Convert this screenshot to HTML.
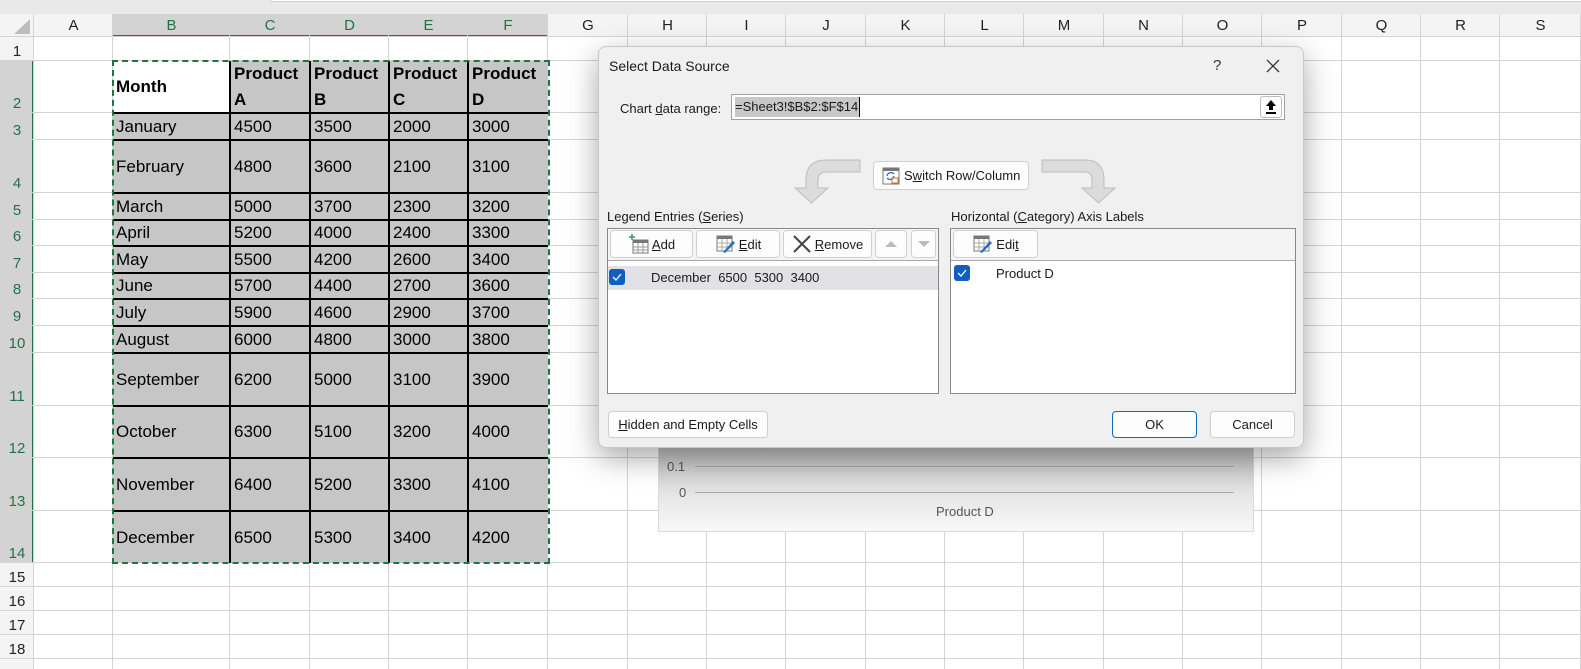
<!DOCTYPE html>
<html><head><meta charset="utf-8">
<style>
*{box-sizing:border-box;margin:0;padding:0}
body{width:1581px;height:669px;overflow:hidden;background:#fff;position:relative;font-family:"Liberation Sans",sans-serif}
.a{position:absolute}
.ch{position:absolute;top:14px;height:23px;font-size:15px;color:#222;text-align:center;line-height:23px}
.rh{position:absolute;left:0;width:34px;font-size:15px;color:#222;text-align:center;display:flex;align-items:flex-end;justify-content:center;padding-bottom:1px}
.c{position:absolute;background:#c6c6c6;font-size:17px;color:#000;display:flex;align-items:center;padding-left:3px}
.d{font-size:13px;color:#1a1a1a;font-family:"Liberation Sans",sans-serif}
.btn{position:absolute;background:#fdfdfd;border:1px solid #d0d0d0;border-radius:4px;font-size:13px;color:#1a1a1a;display:flex;align-items:center;justify-content:center}
u{text-decoration:underline}
</style></head><body>
<div class="a" style="left:0;top:0;width:1581px;height:14px;background:#e9e9e9"></div>
<div class="a" style="left:270px;top:0;width:1311px;height:2px;background:#fff;border-left:1px solid #ccc;border-bottom:1px solid #ccc"></div>
<div class="a" style="left:0;top:14px;width:1581px;height:23px;background:#f4f4f4;border-bottom:1px solid #bbb"></div>
<div class="a" style="left:113px;top:14px;width:435px;height:23px;background:#d3d3d3;border-bottom:2px solid #217346"></div>
<div class="a" style="left:0;top:37px;width:34px;height:632px;background:#f4f4f4;border-right:1px solid #bbb"></div>
<div class="a" style="left:0;top:61px;width:34px;height:502px;background:#d3d3d3;border-right:2px solid #217346"></div>
<svg class="a" style="left:0;top:14px" width="34" height="23"><polygon points="30,5 30,20 14,20" fill="#bdbdbd"/></svg>
<div id="grid"></div>
<script>
var xs=[34,113,230,310,389,468,548,628,707,786,866,945,1024,1104,1183,1262,1342,1421,1500,1581];
var ys=[37,61,113,140,193,220,246,273,299,326,353,406,458,511,563,587,611,635,659];
var g=document.getElementById('grid'),h='';
xs.forEach(function(x){h+='<div class="a" style="left:'+(x-1)+'px;top:14px;width:1px;height:655px;background:#d4d4d4"></div>'});
ys.forEach(function(y){h+='<div class="a" style="left:0;top:'+(y-1)+'px;width:1581px;height:1px;background:#d4d4d4"></div>'});
g.innerHTML=h;
</script>
<div class="ch" style="left:34px;width:79px">A</div>
<div class="ch" style="left:113px;width:117px;color:#217346">B</div>
<div class="ch" style="left:230px;width:80px;color:#217346">C</div>
<div class="ch" style="left:310px;width:79px;color:#217346">D</div>
<div class="ch" style="left:389px;width:79px;color:#217346">E</div>
<div class="ch" style="left:468px;width:80px;color:#217346">F</div>
<div class="ch" style="left:548px;width:80px">G</div>
<div class="ch" style="left:628px;width:79px">H</div>
<div class="ch" style="left:707px;width:79px">I</div>
<div class="ch" style="left:786px;width:80px">J</div>
<div class="ch" style="left:866px;width:79px">K</div>
<div class="ch" style="left:945px;width:79px">L</div>
<div class="ch" style="left:1024px;width:80px">M</div>
<div class="ch" style="left:1104px;width:79px">N</div>
<div class="ch" style="left:1183px;width:79px">O</div>
<div class="ch" style="left:1262px;width:80px">P</div>
<div class="ch" style="left:1342px;width:79px">Q</div>
<div class="ch" style="left:1421px;width:79px">R</div>
<div class="ch" style="left:1500px;width:81px">S</div>

<div class="rh" style="top:37px;height:24px">1</div>
<div class="rh" style="top:61px;height:52px;color:#217346">2</div>
<div class="rh" style="top:113px;height:27px;color:#217346">3</div>
<div class="rh" style="top:140px;height:53px;color:#217346">4</div>
<div class="rh" style="top:193px;height:27px;color:#217346">5</div>
<div class="rh" style="top:220px;height:26px;color:#217346">6</div>
<div class="rh" style="top:246px;height:27px;color:#217346">7</div>
<div class="rh" style="top:273px;height:26px;color:#217346">8</div>
<div class="rh" style="top:299px;height:27px;color:#217346">9</div>
<div class="rh" style="top:326px;height:27px;color:#217346">10</div>
<div class="rh" style="top:353px;height:53px;color:#217346">11</div>
<div class="rh" style="top:406px;height:52px;color:#217346">12</div>
<div class="rh" style="top:458px;height:53px;color:#217346">13</div>
<div class="rh" style="top:511px;height:52px;color:#217346">14</div>
<div class="rh" style="top:563px;height:24px">15</div>
<div class="rh" style="top:587px;height:24px">16</div>
<div class="rh" style="top:611px;height:24px">17</div>
<div class="rh" style="top:635px;height:24px">18</div>

<!-- table -->
<div class="a" style="left:113px;top:61px;width:435px;height:502px;background:#000"></div>
<div class="c" style="left:113px;top:61px;width:116px;height:51px;background:#fff;font-weight:bold">Month</div>
<div class="c" style="left:231px;top:61px;width:78px;height:51px;font-weight:bold;line-height:26px;align-items:flex-start">Product<br>A</div>
<div class="c" style="left:311px;top:61px;width:77px;height:51px;font-weight:bold;line-height:26px;align-items:flex-start">Product<br>B</div>
<div class="c" style="left:390px;top:61px;width:77px;height:51px;font-weight:bold;line-height:26px;align-items:flex-start">Product<br>C</div>
<div class="c" style="left:469px;top:61px;width:79px;height:51px;font-weight:bold;line-height:26px;align-items:flex-start">Product<br>D</div>

<div id="rows"></div>
<div class="c" style="left:113px;top:114px;width:116px;height:25px">January</div><div class="c" style="left:231px;top:114px;width:78px;height:25px">4500</div><div class="c" style="left:311px;top:114px;width:77px;height:25px">3500</div><div class="c" style="left:390px;top:114px;width:77px;height:25px">2000</div><div class="c" style="left:469px;top:114px;width:79px;height:25px">3000</div>
<div class="c" style="left:113px;top:141px;width:116px;height:51px">February</div><div class="c" style="left:231px;top:141px;width:78px;height:51px">4800</div><div class="c" style="left:311px;top:141px;width:77px;height:51px">3600</div><div class="c" style="left:390px;top:141px;width:77px;height:51px">2100</div><div class="c" style="left:469px;top:141px;width:79px;height:51px">3100</div>
<div class="c" style="left:113px;top:194px;width:116px;height:25px">March</div><div class="c" style="left:231px;top:194px;width:78px;height:25px">5000</div><div class="c" style="left:311px;top:194px;width:77px;height:25px">3700</div><div class="c" style="left:390px;top:194px;width:77px;height:25px">2300</div><div class="c" style="left:469px;top:194px;width:79px;height:25px">3200</div>
<div class="c" style="left:113px;top:221px;width:116px;height:24px">April</div><div class="c" style="left:231px;top:221px;width:78px;height:24px">5200</div><div class="c" style="left:311px;top:221px;width:77px;height:24px">4000</div><div class="c" style="left:390px;top:221px;width:77px;height:24px">2400</div><div class="c" style="left:469px;top:221px;width:79px;height:24px">3300</div>
<div class="c" style="left:113px;top:247px;width:116px;height:25px">May</div><div class="c" style="left:231px;top:247px;width:78px;height:25px">5500</div><div class="c" style="left:311px;top:247px;width:77px;height:25px">4200</div><div class="c" style="left:390px;top:247px;width:77px;height:25px">2600</div><div class="c" style="left:469px;top:247px;width:79px;height:25px">3400</div>
<div class="c" style="left:113px;top:274px;width:116px;height:24px">June</div><div class="c" style="left:231px;top:274px;width:78px;height:24px">5700</div><div class="c" style="left:311px;top:274px;width:77px;height:24px">4400</div><div class="c" style="left:390px;top:274px;width:77px;height:24px">2700</div><div class="c" style="left:469px;top:274px;width:79px;height:24px">3600</div>
<div class="c" style="left:113px;top:300px;width:116px;height:25px">July</div><div class="c" style="left:231px;top:300px;width:78px;height:25px">5900</div><div class="c" style="left:311px;top:300px;width:77px;height:25px">4600</div><div class="c" style="left:390px;top:300px;width:77px;height:25px">2900</div><div class="c" style="left:469px;top:300px;width:79px;height:25px">3700</div>
<div class="c" style="left:113px;top:327px;width:116px;height:25px">August</div><div class="c" style="left:231px;top:327px;width:78px;height:25px">6000</div><div class="c" style="left:311px;top:327px;width:77px;height:25px">4800</div><div class="c" style="left:390px;top:327px;width:77px;height:25px">3000</div><div class="c" style="left:469px;top:327px;width:79px;height:25px">3800</div>
<div class="c" style="left:113px;top:354px;width:116px;height:51px">September</div><div class="c" style="left:231px;top:354px;width:78px;height:51px">6200</div><div class="c" style="left:311px;top:354px;width:77px;height:51px">5000</div><div class="c" style="left:390px;top:354px;width:77px;height:51px">3100</div><div class="c" style="left:469px;top:354px;width:79px;height:51px">3900</div>
<div class="c" style="left:113px;top:407px;width:116px;height:50px">October</div><div class="c" style="left:231px;top:407px;width:78px;height:50px">6300</div><div class="c" style="left:311px;top:407px;width:77px;height:50px">5100</div><div class="c" style="left:390px;top:407px;width:77px;height:50px">3200</div><div class="c" style="left:469px;top:407px;width:79px;height:50px">4000</div>
<div class="c" style="left:113px;top:459px;width:116px;height:51px">November</div><div class="c" style="left:231px;top:459px;width:78px;height:51px">6400</div><div class="c" style="left:311px;top:459px;width:77px;height:51px">5200</div><div class="c" style="left:390px;top:459px;width:77px;height:51px">3300</div><div class="c" style="left:469px;top:459px;width:79px;height:51px">4100</div>
<div class="c" style="left:113px;top:512px;width:116px;height:51px">December</div><div class="c" style="left:231px;top:512px;width:78px;height:51px">6500</div><div class="c" style="left:311px;top:512px;width:77px;height:51px">5300</div><div class="c" style="left:390px;top:512px;width:77px;height:51px">3400</div><div class="c" style="left:469px;top:512px;width:79px;height:51px">4200</div>
<div class="a" style="left:112px;top:60px;width:438px;height:504px;border:2px dashed #217346"></div>

<!-- chart behind -->
<div class="a" style="left:658px;top:440px;width:596px;height:92px;border:1px solid #d9d9d9;background:linear-gradient(#b8b8b8,#e6e6e6 60%,#f8f8f8)"></div>
<div class="a" style="left:695px;top:466px;width:539px;height:1px;background:#aaa"></div>
<div class="a" style="left:695px;top:492px;width:539px;height:1px;background:#aaa"></div>
<div class="a d" style="left:667px;top:459px;color:#555">0.1</div>
<div class="a d" style="left:679px;top:485px;color:#555">0</div>
<div class="a d" style="left:936px;top:504px;color:#555">Product D</div>

<!-- dialog -->
<div class="a" style="left:598px;top:46px;width:706px;height:402px;background:#f0f0f0;border:1px solid #c8c8c8;border-radius:8px;box-shadow:0 10px 30px rgba(0,0,0,.35)"></div>
<div class="a" style="left:609px;top:58px;font-size:14px;color:#1a1a1a">Select Data Source</div>
<div class="a" style="left:1213px;top:57px;font-size:15px;color:#333">?</div>
<svg class="a" style="left:1266px;top:59px" width="14" height="14"><path d="M1,1L13,13M13,1L1,13" stroke="#333" stroke-width="1.3"/></svg>
<div class="a d" style="left:620px;top:101px">Chart <u>d</u>ata range:</div>
<div class="a" style="left:731px;top:94px;width:554px;height:26px;background:#fff;border:1px solid #a0a0a0"></div>
<div class="a d" style="left:735px;top:97px;height:20px;line-height:20px;background:#c8c8c8;padding-right:1px;border-right:1px solid #000">=Sheet3!$B$2:$F$14</div>
<div class="a" style="left:1260px;top:96px;width:22px;height:22px;background:#fff;border:1px solid #bbb;border-radius:3px"></div>
<svg class="a" style="left:1264px;top:99px" width="14" height="16"><path d="M7,1L2,7H5V11H9V7H12Z" fill="#000"/><rect x="2" y="13" width="10" height="2" fill="#000"/></svg>

<svg class="a" style="left:0;top:0" width="1581" height="669"><path d="M860,160L826,160Q806,160 806,180L806,188L795,188L811.5,203L828,188L818,188L818,180Q818,172 826,172L860,172Z" fill="#dcdcdc" stroke="#bdbdbd"/><path d="M1042,160L1085,160Q1104,160 1104,180L1104,188L1115,188L1098.5,203L1082,188L1092,188L1092,180Q1092,172 1085,172L1042,172Z" fill="#dcdcdc" stroke="#bdbdbd"/></svg>
<div class="btn" style="left:873px;top:161px;width:156px;height:29px;justify-content:flex-start;padding-left:8px"><svg width="18" height="18" style="margin-right:4px"><rect x="1" y="1" width="16" height="16" fill="#fff" stroke="#777"/><rect x="1" y="1" width="16" height="3" fill="#777"/><path d="M5,9a4,4 0 0 1 7,-2M12,9a4,4 0 0 1 -7,2" stroke="#2a6fbf" fill="none" stroke-width="1.3"/><rect x="10" y="11" width="6" height="5" fill="none" stroke="#e07020"/></svg>S<u>w</u>itch Row/Column</div>

<div class="a d" style="left:607px;top:209px">Legend Entries (<u>S</u>eries)</div>
<div class="a d" style="left:951px;top:209px">Horizontal (<u>C</u>ategory) Axis Labels</div>
<div class="a" style="left:607px;top:228px;width:332px;height:166px;background:#fff;border:1px solid #888"></div>
<div class="a" style="left:608px;top:229px;width:330px;height:32px;background:#f4f4f4;border-bottom:1px solid #aaa"></div>
<div class="btn" style="left:610px;top:230px;width:83px;height:28px"><svg width="22" height="20" style="margin-right:2px"><path d="M4,0V6M1,3H7" stroke="#3a9a6a" stroke-width="1.5"/><rect x="5" y="6" width="15" height="13" fill="#fff" stroke="#777"/><rect x="5" y="6" width="15" height="3" fill="#777"/><path d="M5,13H20M5,16H20M10,9V19M15,9V19" stroke="#999"/></svg><u>A</u>dd</div>
<div class="btn" style="left:696px;top:230px;width:84px;height:28px"><svg width="22" height="20" style="margin-right:2px"><rect x="2" y="2" width="15" height="15" fill="#fff" stroke="#777"/><rect x="2" y="2" width="15" height="3" fill="#777"/><path d="M2,9H17M2,13H17M7,5V17M12,5V17" stroke="#aaa"/><path d="M8,18L18,7L20,9L10,19Z" fill="#2a6fbf"/></svg><u>E</u>dit</div>
<div class="btn" style="left:783px;top:230px;width:89px;height:28px"><svg width="20" height="18" style="margin-right:3px"><path d="M2,1L18,17M18,1L2,17" stroke="#444" stroke-width="2"/></svg><u>R</u>emove</div>
<div class="btn" style="left:875px;top:230px;width:32px;height:28px"><svg width="12" height="8"><path d="M0,7L6,1L12,7Z" fill="#bbb"/></svg></div>
<div class="btn" style="left:911px;top:230px;width:25px;height:28px"><svg width="12" height="8"><path d="M0,1L6,7L12,1Z" fill="#bbb"/></svg></div>
<div class="a" style="left:608px;top:266px;width:330px;height:24px;background:#e2e2e6"></div>
<div class="a" style="left:609px;top:269px;width:16px;height:16px;background:#0f5fc0;border-radius:3px"></div>
<svg class="a" style="left:609px;top:269px" width="16" height="16"><path d="M4,8L7,11L12,5" stroke="#fff" fill="none" stroke-width="1.3"/></svg>
<div class="a d" style="left:651px;top:270px">December&nbsp; 6500&nbsp; 5300&nbsp; 3400</div>

<div class="a" style="left:950px;top:228px;width:346px;height:166px;background:#fff;border:1px solid #888"></div>
<div class="a" style="left:951px;top:229px;width:344px;height:32px;background:#f4f4f4;border-bottom:1px solid #aaa"></div>
<div class="btn" style="left:953px;top:230px;width:85px;height:28px"><svg width="22" height="20" style="margin-right:2px"><rect x="2" y="2" width="15" height="15" fill="#fff" stroke="#777"/><rect x="2" y="2" width="15" height="3" fill="#777"/><path d="M2,9H17M2,13H17M7,5V17M12,5V17" stroke="#aaa"/><path d="M8,18L18,7L20,9L10,19Z" fill="#2a6fbf"/></svg>Edi<u>t</u></div>
<div class="a" style="left:954px;top:265px;width:16px;height:16px;background:#0f5fc0;border-radius:3px"></div>
<svg class="a" style="left:954px;top:265px" width="16" height="16"><path d="M4,8L7,11L12,5" stroke="#fff" fill="none" stroke-width="1.3"/></svg>
<div class="a d" style="left:996px;top:266px">Product D</div>

<div class="btn" style="left:608px;top:411px;width:160px;height:27px"><u>H</u>idden and Empty Cells</div>
<div class="btn" style="left:1112px;top:411px;width:85px;height:27px;border-color:#0f6cbd">OK</div>
<div class="btn" style="left:1210px;top:411px;width:85px;height:27px">Cancel</div>
</body></html>
